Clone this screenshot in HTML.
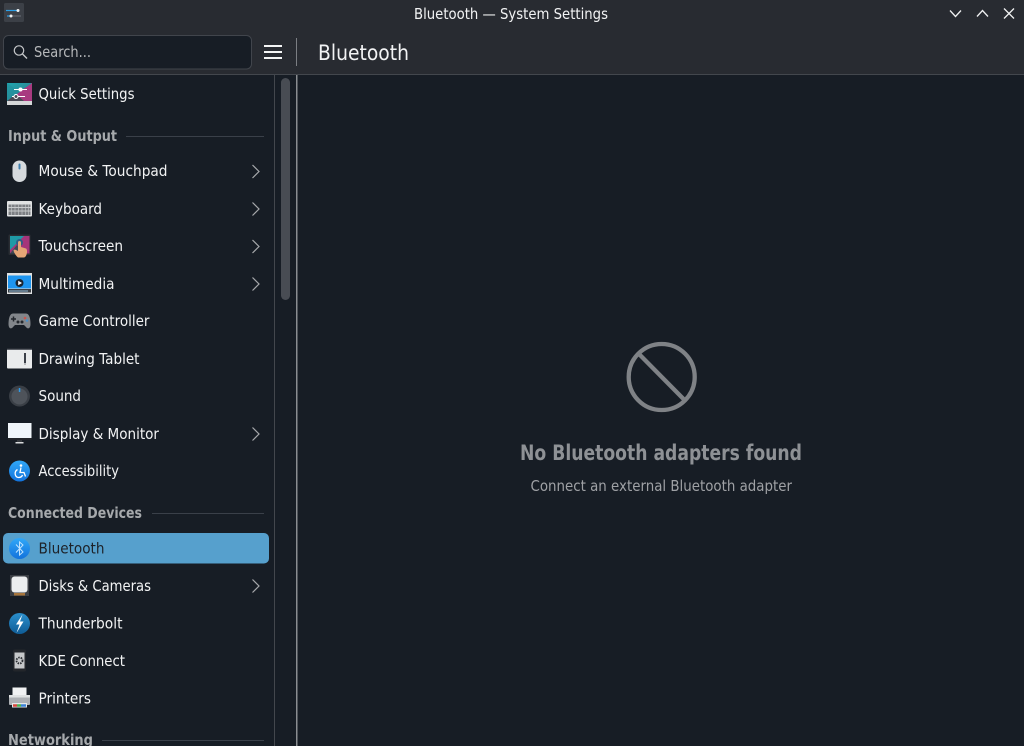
<!DOCTYPE html>
<html><head><meta charset="utf-8"><title>Bluetooth — System Settings</title>
<style>
html,body{margin:0;padding:0;background:#171d25;width:1024px;height:746px;overflow:hidden}
svg{display:block}
text{font-family:"DejaVu Sans","Liberation Sans",sans-serif;font-size:15px;fill:#f2f3f4}
.h{font-weight:bold;fill:#a6a9ac;font-size:15px}
.l{stroke:#3a4049;stroke-width:1;fill:none}
.c{stroke:#a6a8ab;stroke-width:1.200;fill:none}
</style></head><body>
<svg width="1024" height="746" viewBox="0 0 1024 746" xmlns="http://www.w3.org/2000/svg">
<defs>
<linearGradient id="qs" x1="0" y1="0" x2="1" y2="1"><stop offset="0" stop-color="#1fa7b0"/><stop offset=".5" stop-color="#2a8f9a"/><stop offset=".5" stop-color="#a83a80"/><stop offset="1" stop-color="#a83a80"/></linearGradient>
<linearGradient id="blue" x1="0" y1="0" x2="0" y2="1"><stop offset="0" stop-color="#31a8f8"/><stop offset="1" stop-color="#1272dc"/></linearGradient>
<linearGradient id="tb" x1="0" y1="0" x2="0" y2="1"><stop offset="0" stop-color="#2b8fcc"/><stop offset="1" stop-color="#0f5c96"/></linearGradient>
</defs>
<rect width="1024" height="746" fill="#171d25"/>
<!-- title / header -->
<rect width="1024" height="74" fill="#282b31"/>
<rect y="74" width="1024" height="1" fill="#43474d"/>
<!-- window icon -->
<rect x="4" y="3" width="20" height="19" rx="1.500" fill="#3c4047"/>
<path d="M6 10.500H19" stroke="#2b9fe8" stroke-width="1.200"/><circle cx="18" cy="10.500" r="1.500" fill="#eff0f1"/>
<path d="M7 16H21" stroke="#6d7178" stroke-width="1"/><path d="M7 16H11" stroke="#2b9fe8" stroke-width="1.200"/><circle cx="11" cy="16" r="1.500" fill="#eff0f1"/>
<text x="414" y="19" textLength="194" lengthAdjust="spacingAndGlyphs">Bluetooth — System Settings</text>
<!-- window buttons -->
<path d="M950 10.500L955.500 16.500L961 10.500" fill="none" stroke="#eff0f1" stroke-width="1.300"/>
<path d="M977 16.500L982.500 10.500L988 16.500" fill="none" stroke="#eff0f1" stroke-width="1.300"/>
<path d="M1004 8.500L1014 18.500M1014 8.500L1004 18.500" fill="none" stroke="#eff0f1" stroke-width="1.300"/>
<!-- search -->
<rect x="3.500" y="35.500" width="248" height="33.500" rx="5" fill="#171d25" stroke="#41454c"/>
<circle cx="19" cy="50.500" r="4.700" fill="none" stroke="#c4c6c8" stroke-width="1.200"/>
<path d="M22.500 54L27 58.500" stroke="#c4c6c8" stroke-width="1.400"/>
<text x="34" y="57" textLength="57" lengthAdjust="spacingAndGlyphs" style="fill:#b6b8ba">Search...</text>
<!-- hamburger -->
<path d="M264 46H282M264 52H282M264 58H282" stroke="#f4f5f5" stroke-width="2"/>
<rect x="296" y="38" width="1" height="28" fill="#7b7e83"/>
<text x="318" y="60" textLength="91" lengthAdjust="spacingAndGlyphs" style="font-size:21px">Bluetooth</text>
<!-- sidebar frame -->
<rect x="274" y="75" width="1" height="671" fill="#43474d"/>
<rect x="296" y="75" width="1.500" height="671" fill="#8a8d91"/>
<rect x="281" y="78" width="9" height="222" rx="4.500" fill="#484c53"/>
<!-- selected -->
<rect x="3" y="533" width="266" height="30.500" rx="5" fill="#56a0cd"/>
<!-- headers -->
<text class="h" x="8" y="141" textLength="109" lengthAdjust="spacingAndGlyphs">Input &amp; Output</text>
<path class="l" d="M126 136.500H264"/>
<text class="h" x="8" y="518" textLength="134" lengthAdjust="spacingAndGlyphs">Connected Devices</text>
<path class="l" d="M152 513.500H264"/>
<text class="h" x="8" y="745" textLength="85" lengthAdjust="spacingAndGlyphs">Networking</text>
<path class="l" d="M102 740.500H264"/>
<!-- labels -->
<text x="38.500" y="99" textLength="96" lengthAdjust="spacingAndGlyphs">Quick Settings</text>
<text x="38.500" y="176" textLength="129" lengthAdjust="spacingAndGlyphs">Mouse &amp; Touchpad</text>
<text x="38.500" y="214" textLength="63.500" lengthAdjust="spacingAndGlyphs">Keyboard</text>
<text x="38.500" y="251" textLength="84.500" lengthAdjust="spacingAndGlyphs">Touchscreen</text>
<text x="38.500" y="289" textLength="76" lengthAdjust="spacingAndGlyphs">Multimedia</text>
<text x="38.500" y="326" textLength="111" lengthAdjust="spacingAndGlyphs">Game Controller</text>
<text x="38.500" y="364" textLength="101" lengthAdjust="spacingAndGlyphs">Drawing Tablet</text>
<text x="38.500" y="401" textLength="42.500" lengthAdjust="spacingAndGlyphs">Sound</text>
<text x="38.500" y="439" textLength="120.500" lengthAdjust="spacingAndGlyphs">Display &amp; Monitor</text>
<text x="38.500" y="476" textLength="80.500" lengthAdjust="spacingAndGlyphs">Accessibility</text>
<text x="38.500" y="553.500" textLength="66" lengthAdjust="spacingAndGlyphs" style="fill:#1d2229">Bluetooth</text>
<text x="38.500" y="591" textLength="112.500" lengthAdjust="spacingAndGlyphs">Disks &amp; Cameras</text>
<text x="38.500" y="628.500" textLength="84" lengthAdjust="spacingAndGlyphs">Thunderbolt</text>
<text x="38.500" y="666" textLength="86.500" lengthAdjust="spacingAndGlyphs">KDE Connect</text>
<text x="38.500" y="703.500" textLength="52.500" lengthAdjust="spacingAndGlyphs">Printers</text>
<!-- chevrons -->
<path class="c" d="M252.500 165L259 171.500L252.500 178"/>
<path class="c" d="M252.500 202.500L259 209L252.500 215.500"/>
<path class="c" d="M252.500 240L259 246.500L252.500 253"/>
<path class="c" d="M252.500 277.500L259 284L252.500 290.500"/>
<path class="c" d="M252.500 427.500L259 434L252.500 440.500"/>
<path class="c" d="M252.500 579.500L259 586L252.500 592.500"/>
<!-- Quick settings icon -->
<rect x="7" y="83" width="25" height="22" fill="#d5d7d8"/>
<rect x="7" y="83" width="25" height="18" fill="url(#qs)"/>
<path d="M7 101L20 92L7 83Z" fill="#238f9c" opacity=".6"/>
<path d="M7 101L16 94L24 101Z" fill="#4a4a55"/>
<path d="M14 89.500H27" stroke="#fff" stroke-width="1"/><circle cx="20.500" cy="89.500" r="2" fill="#fff"/>
<path d="M12 96.500H25" stroke="#fff" stroke-width="1"/><circle cx="16" cy="96.500" r="2" fill="#4a4a55" stroke="#fff"/>
<!-- Mouse -->
<rect x="12.500" y="160.500" width="14" height="21.500" rx="7" fill="#d6dadd"/>
<rect x="18.500" y="163.500" width="2" height="6" rx="1" fill="#3f7fae"/>
<!-- Keyboard -->
<rect x="7" y="201" width="25" height="15.500" rx="1" fill="#e0e2e3"/>
<rect x="8.500" y="204.500" width="22" height="10.500" fill="#7d8084"/>
<path d="M8.500 207.500H30.500M8.500 211H30.500" stroke="#c9cbcd" stroke-width="1"/>
<path d="M11.500 204V215M15 204V215M18.500 204V215M22 204V215M25.500 204V215M28.500 204V215" stroke="#c9cbcd" stroke-width=".6"/>
<!-- Touchscreen -->
<rect x="8.500" y="234.500" width="22" height="20.500" rx="1" fill="#2a2d33"/>
<path d="M10 236H29.500V253.500H10Z" fill="#a5357a"/>
<path d="M10 236H24L10 250Z" fill="#1f9aa6"/>
<path d="M10 253.500L17 245L25 253.500Z" fill="#3f4a55"/>
<circle cx="19.500" cy="242.500" r="3.500" fill="#2d5f88"/>
<path d="M18 242.500C18 240.500 21 240.500 21 242.500V247L26 248.500C28 249.500 27 257 24 257.500H18C16 256 13.500 252 13.500 250C14.500 249 16.500 250 18 251Z" fill="#e5a576"/>
<!-- Multimedia -->
<rect x="7" y="273" width="25" height="21" fill="#dfe1e2"/>
<rect x="8" y="275.500" width="23" height="13" fill="#1e95ef"/>
<rect x="8" y="289" width="23" height="3.500" fill="#3b4046"/>
<path d="M9 291H28" stroke="#8fb8d6" stroke-width="1"/>
<circle cx="19.500" cy="283" r="4" fill="#1b2530"/><path d="M18.200 280.800L22 283L18.200 285.200Z" fill="#fff"/>
<!-- Game controller -->
<path d="M13 313.500H26C29 313.500 30.500 318 30.500 324C30.500 329 27.500 329.500 25.500 326.500L24 325H15L13.500 326.500C11.500 329.500 8.500 329 8.500 324C8.500 318 10 313.500 13 313.500Z" fill="#82868b"/>
<path d="M11 319H16M13.500 316.500V321.500" stroke="#23272d" stroke-width="1.500"/>
<circle cx="25" cy="318" r="1.300" fill="#c9574f"/><circle cx="27" cy="320.500" r="1.300" fill="#4a8fc9"/><circle cx="18" cy="322" r="1.500" fill="#23272d"/><circle cx="22" cy="322" r="1.500" fill="#23272d"/>
<!-- Drawing tablet -->
<rect x="7" y="348.500" width="25" height="20" rx="1" fill="#e9ebec"/>
<path d="M7 349H32" stroke="#2b3038" stroke-width="1.500"/>
<rect x="24" y="353" width="2" height="10" fill="#3b4048"/><rect x="24" y="363" width="2" height="2" fill="#b8babd"/>
<!-- Sound -->
<circle cx="19.500" cy="396" r="10.500" fill="#3a3f46"/>
<circle cx="19.500" cy="396.500" r="8" fill="#4e535a"/>
<rect x="18.800" y="388" width="1.500" height="4" fill="#2f9ae6"/>
<!-- Display -->
<rect x="8" y="423" width="23.500" height="16.500" fill="#f1f6fb"/>
<rect x="8" y="438" width="23.500" height="2" fill="#23262b"/>
<rect x="17" y="440" width="5" height="2" fill="#33373d"/><rect x="15.500" y="442" width="8" height="1.500" fill="#d9dbdd"/>
<!-- Accessibility -->
<circle cx="19.500" cy="471" r="10.500" fill="url(#blue)"/>
<circle cx="21" cy="465.500" r="1.300" fill="#fff"/>
<path d="M21 467.500L20 472.500H24L25.500 476.500M17.500 469.500C14 471.500 14.500 477 18.500 477.500C20.500 477.500 22 476.500 22.500 475" fill="none" stroke="#fff" stroke-width="1.300"/>
<!-- Bluetooth icon -->
<circle cx="19.500" cy="548.500" r="10.500" fill="url(#blue)"/>
<path d="M16 544.500L23 552L19.500 555V542L23 545L16 552.500" fill="none" stroke="#bfe3ff" stroke-width="1"/>
<!-- Disks -->
<rect x="10" y="575" width="19" height="21" fill="#3a3e44"/>
<rect x="11.500" y="576.500" width="16" height="16" rx="3" fill="#eceeef"/>
<rect x="14" y="593" width="11" height="2.500" fill="#a8763c"/>
<!-- Thunderbolt -->
<circle cx="19.500" cy="623.500" r="10.500" fill="url(#tb)"/>
<path d="M22.500 614.500L16 624.500H19.500L16.500 633L23.500 621.500H20Z" fill="#fff"/>
<!-- KDE Connect -->
<rect x="13" y="649.500" width="13" height="22" rx="1.500" fill="#23262b"/>
<rect x="14.500" y="652.500" width="10" height="16" fill="#c5c7c9"/>
<circle cx="19.500" cy="660.500" r="3" fill="none" stroke="#2a2d32" stroke-width="1.800" stroke-dasharray="1.500 1"/>
<!-- Printer -->
<rect x="12.500" y="687.500" width="14" height="9" fill="#f1f2f3"/>
<rect x="9" y="695" width="21" height="10" rx="1" fill="#aeb1b5"/>
<rect x="9" y="695" width="21" height="2.500" fill="#e0e2e3"/>
<rect x="12" y="703" width="15" height="4.500" fill="#e6e8e9"/>
<path d="M13 705.500H17" stroke="#d8483f" stroke-width="2.500"/><path d="M17 705.500H21" stroke="#48b04f" stroke-width="2.500"/><path d="M21 705.500H26" stroke="#3b82d8" stroke-width="2.500"/>
<!-- placeholder -->
<circle cx="661.700" cy="377" r="33" fill="none" stroke="#7f8286" stroke-width="4.300"/>
<path d="M639.500 354.500L684 399.500" stroke="#7f8286" stroke-width="4.300"/>
<text x="520" y="460" textLength="282" lengthAdjust="spacingAndGlyphs" style="font-size:21px;font-weight:bold;fill:#8e9195">No Bluetooth adapters found</text>
<text x="530.500" y="491" textLength="261.500" lengthAdjust="spacingAndGlyphs" style="fill:#9fa1a5">Connect an external Bluetooth adapter</text>
</svg>
</body></html>
